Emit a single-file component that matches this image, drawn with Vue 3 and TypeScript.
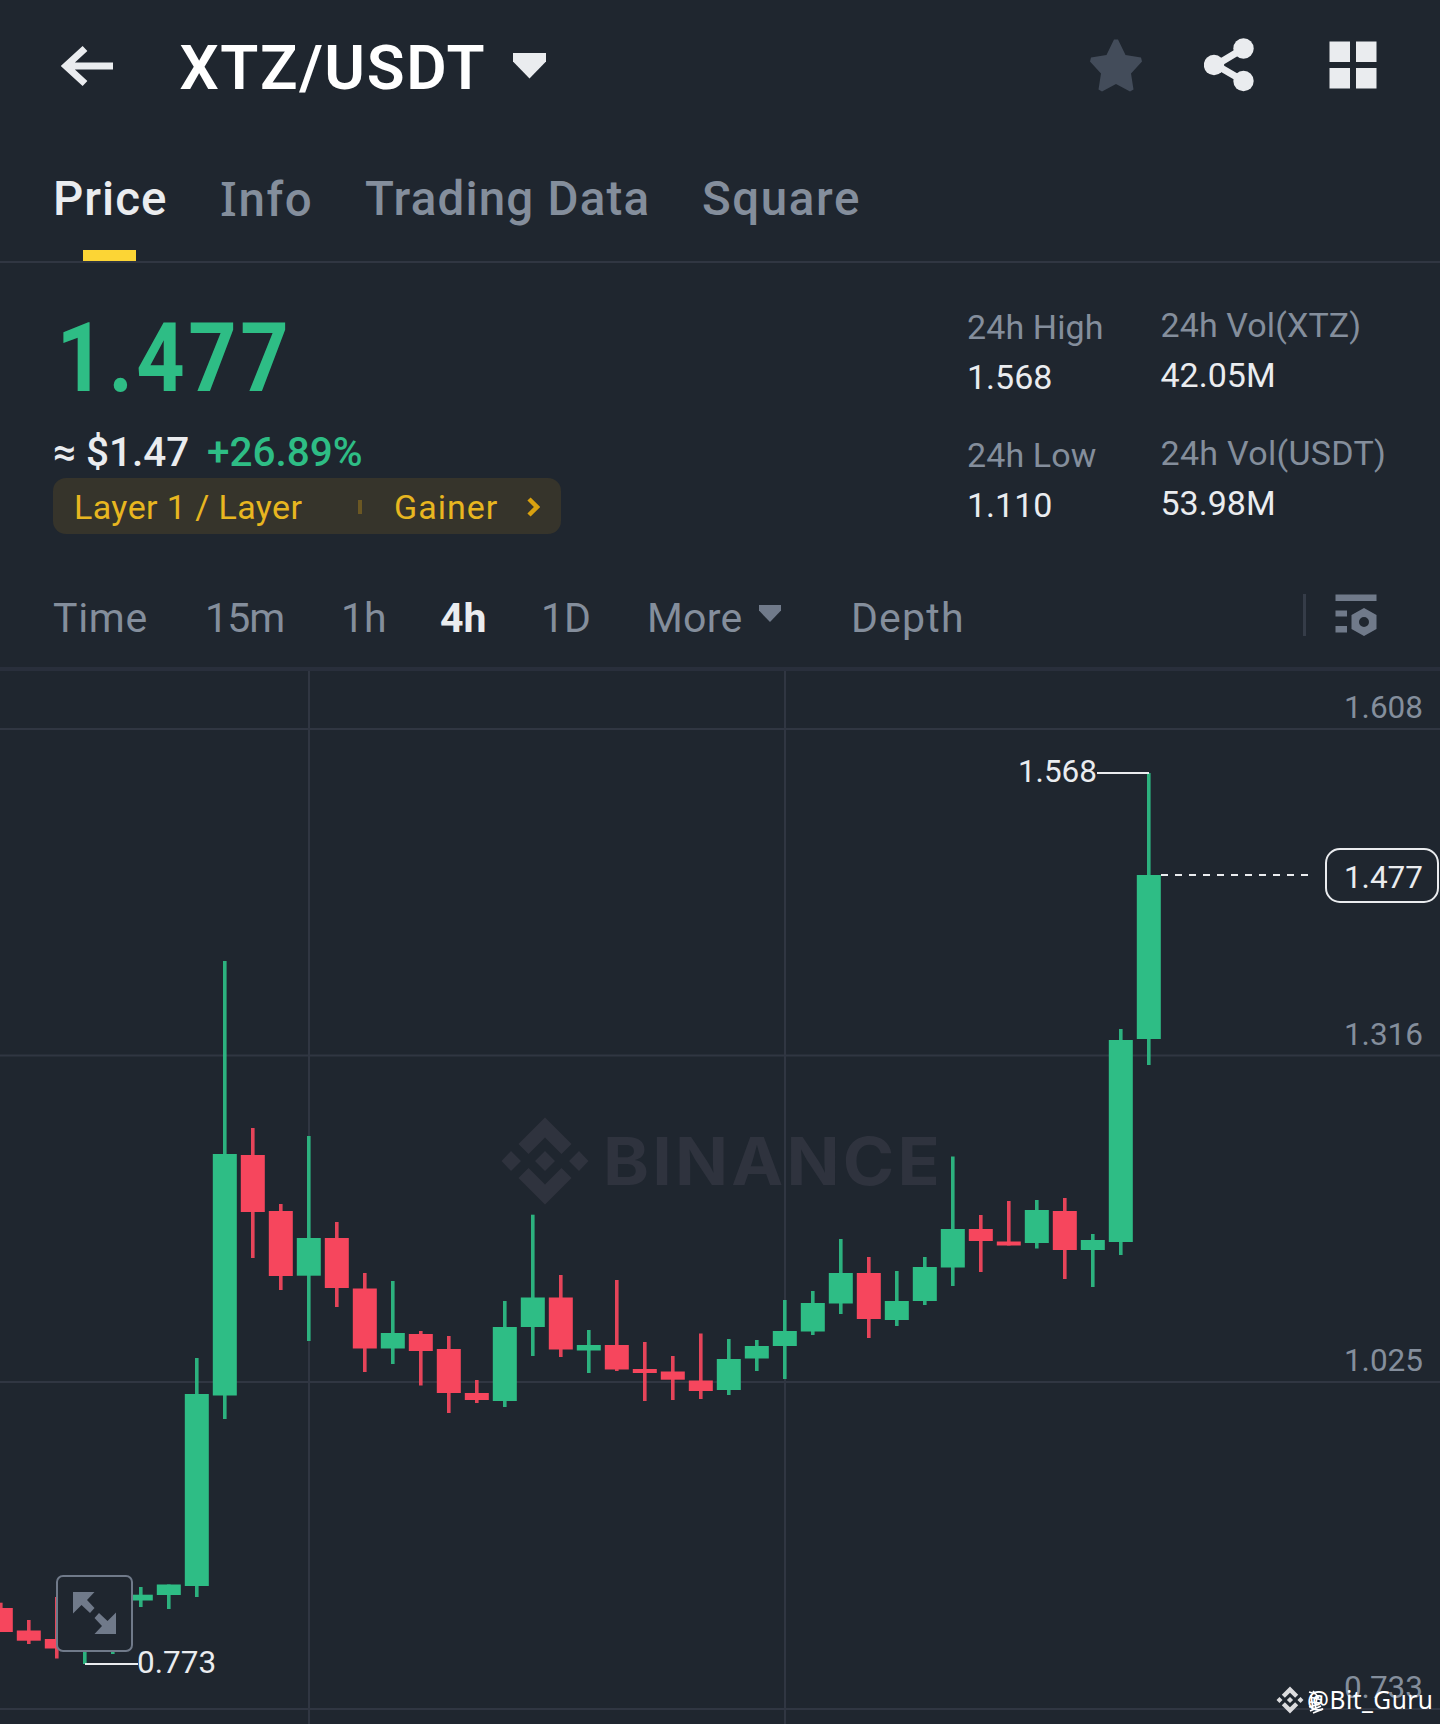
<script setup lang="ts">
type Candle = [wickTop: number, top: number, bottom: number, wickBottom: number, up: boolean]

const STEP = 28
const FIRST_X = 0.8

const candles: Candle[] = [
  [1602.7, 1608, 1632, 1632, false],
  [1620, 1630.5, 1640.7, 1644, false],
  [1597, 1639, 1648.5, 1658.5, false],
  [1630, 1640, 1648, 1664, true],
  [1590, 1600, 1640, 1654, true],
  [1587, 1594.7, 1600.5, 1607, true],
  [1584.5, 1584.5, 1595, 1609, true],
  [1358, 1394, 1586, 1597, true],
  [961, 1154, 1395.5, 1419, true],
  [1128, 1155, 1212, 1258, false],
  [1204, 1211, 1276, 1290, false],
  [1136, 1238, 1275.7, 1341, true],
  [1222, 1238, 1288, 1307, false],
  [1273, 1288.5, 1348.5, 1372, false],
  [1281, 1333, 1348.5, 1364, true],
  [1331, 1334, 1351, 1385.5, false],
  [1336, 1349, 1393, 1413, false],
  [1380, 1393, 1400, 1403, false],
  [1301, 1327, 1401, 1407, true],
  [1214.7, 1297.5, 1327, 1356, true],
  [1275, 1297.5, 1349.5, 1357, false],
  [1330, 1345, 1350.5, 1373, true],
  [1280, 1345, 1369.5, 1371, false],
  [1342, 1369, 1373, 1401, false],
  [1356, 1371.5, 1379.7, 1400, false],
  [1333.5, 1380.5, 1391, 1399, false],
  [1339, 1359, 1390, 1395, true],
  [1340, 1346, 1358.5, 1371, true],
  [1300, 1331, 1346, 1379, true],
  [1291, 1303, 1331.5, 1335, true],
  [1239, 1273, 1303.5, 1314, true],
  [1257, 1273, 1319, 1338, false],
  [1271, 1301, 1320, 1326, true],
  [1257, 1267, 1301, 1305, true],
  [1156.5, 1229, 1267.5, 1286, true],
  [1215, 1229, 1241, 1272, false],
  [1201, 1241.5, 1245.5, 1245.5, false],
  [1200, 1210, 1243, 1248.5, true],
  [1198, 1211, 1250, 1279, false],
  [1234, 1240, 1250, 1287, true],
  [1029, 1040, 1242, 1255, true],
  [773, 875, 1039, 1065, true],
]

const centre = (i: number): number => FIRST_X + i * STEP

const gridRows: { y: number; label: string }[] = [
  { y: 728, label: '1.608' },
  { y: 1054.5, label: '1.316' },
  { y: 1381, label: '1.025' },
  { y: 1708, label: '0.733' },
]
const gridCols: number[] = [308, 784]

const tabs = ['Price', 'Info', 'Trading Data', 'Square']

const stats: { label: string; value: string }[][] = [
  [
    { label: '24h High', value: '1.568' },
    { label: '24h Low', value: '1.110' },
  ],
  [
    { label: '24h Vol(XTZ)', value: '42.05M' },
    { label: '24h Vol(USDT)', value: '53.98M' },
  ],
]

const periods: { text: string; key: string }[] = [
  { text: 'Time', key: 'time' },
  { text: '15m', key: 'm15' },
  { text: '1h', key: 'h1' },
  { text: '4h', key: 'h4' },
  { text: '1D', key: 'd1' },
  { text: 'More', key: 'more' },
  { text: 'Depth', key: 'depth' },
]
</script>

<template>
  <main class="screen">
    <header class="topbar">
      <svg class="back" width="52" height="42" viewBox="0 0 52 42">
        <path d="M24 3.500L5 21L24 38.500M5 21H52" fill="none" stroke="#eaecef" stroke-width="7" />
      </svg>
      <h1 class="pair">XTZ/USDT</h1>
      <svg class="caret" width="33" height="26" viewBox="0 0 33 26">
        <path d="M0 0H33V8.500L16.500 25.500L0 8.500Z" fill="#eaecef" />
      </svg>
      <div class="actions">
        <svg width="54" height="54" viewBox="0 0 54 54">
          <path
            d="M25 1.500H29L36.500 17L52 19.500L53 23.500L42 35.500L44.500 51.500L41 53.500L27 46L13 53.500L9.500 51.500L12 35.500L1 23.500L2 19.500L17.500 17Z"
            fill="#434c5a"
          />
        </svg>
        <svg width="50" height="54" viewBox="0 0 50 54">
          <g fill="#eaecef">
            <circle cx="10" cy="27" r="10.200" />
            <circle cx="39.500" cy="10.500" r="10.200" />
            <circle cx="39.500" cy="43" r="10.200" />
          </g>
          <path d="M39.500 10.500L12 27L39.500 43" fill="none" stroke="#eaecef" stroke-width="7" />
        </svg>
        <svg width="48" height="48" viewBox="0 0 48 48" fill="#eaecef">
          <rect x="0.500" y="0.500" width="20.500" height="20.500" />
          <rect x="27" y="0.500" width="20.500" height="20.500" />
          <rect x="0.500" y="27" width="20.500" height="20.500" />
          <rect x="27" y="27" width="20.500" height="20.500" />
        </svg>
      </div>
    </header>

    <nav class="tabs">
      <span v-for="(t, i) in tabs" :key="t" class="tab" :class="['tab-' + i, { active: i === 0 }]">{{ t }}</span>
    </nav>

    <section class="summary">
      <div class="quote">
        <div class="last">1.477</div>
        <div class="fiat">
          <span class="approx">≈</span><span class="usd">$1.47</span><span class="change">+26.89%</span>
        </div>
        <div class="tags">
          <span class="tag-a">Layer 1 / Layer</span>
          <i class="tag-sep"></i>
          <span class="tag-b">Gainer</span>
          <svg width="13" height="20" viewBox="0 0 13 20">
            <path d="M2 2L10 10L2 18" fill="none" stroke="#d9a10f" stroke-width="4.500" />
          </svg>
        </div>
      </div>
      <div v-for="(col, c) in stats" :key="c" class="stat-col" :class="'stat-col-' + c">
        <div v-for="s in col" :key="s.label" class="stat">
          <div class="stat-label">{{ s.label }}</div>
          <div class="stat-value">{{ s.value }}</div>
        </div>
      </div>
    </section>

    <nav class="periods">
      <span v-for="p in periods" :key="p.key" class="period" :class="p.key">
        {{ p.text }}
        <svg v-if="p.key === 'more'" class="more-caret" width="22" height="17" viewBox="0 0 22 17">
          <path d="M0 0H22V5.500L11 17L0 5.500Z" fill="#707a8a" />
        </svg>
      </span>
      <i class="bar"></i>
      <svg class="settings" width="42" height="42" viewBox="0 0 42 42">
        <g fill="#707a8a">
          <rect x="0.500" y="0.500" width="41" height="6.500" />
          <rect x="0.500" y="16.500" width="11.500" height="6" />
          <rect x="0.500" y="32" width="11.500" height="6.500" />
          <path
            fill-rule="evenodd"
            d="M29 14L41.500 21V35L29 42L16.500 35V21ZM29 23A5 5 0 1 0 29 33A5 5 0 1 0 29 23Z"
          />
        </g>
      </svg>
    </nav>

    <section class="chart">
      <svg class="plot" width="1440" height="1053" viewBox="0 671 1440 1053">
        <g fill="#2f333e">
          <g transform="translate(545 1161)">
            <path d="M0 -43.500L26.500 -17L16.500 -7L0 -23.500L-16.500 -7L-26.500 -17Z" />
            <path d="M0 43.500L26.500 17L16.500 7L0 23.500L-16.500 7L-26.500 17Z" />
            <path d="M0 -10L10 0L0 10L-10 0Z M-34 -10L-24 0L-34 10L-43.500 0Z M34 -10L43.500 0L34 10L24 0Z" />
          </g>
          <text class="brand" x="603" y="1185" textLength="340" lengthAdjust="spacingAndGlyphs">BINANCE</text>
        </g>

        <g fill="#303642">
          <rect v-for="g in gridRows" :key="g.label" x="0" :y="g.y" width="1440" height="2" />
          <rect v-for="x in gridCols" :key="x" :x="x" y="671" width="2" height="1053" />
        </g>

        <g v-for="(c, i) in candles" :key="i" :fill="c[4] ? '#2ebd85' : '#f6465d'">
          <rect :x="centre(i) - 1.800" :y="c[0]" width="3.600" :height="c[3] - c[0]" opacity="0.92" />
          <rect :x="centre(i) - 12" :y="c[1]" width="24" :height="c[2] - c[1]" />
        </g>

        <g class="axis" text-anchor="end">
          <text v-for="g in gridRows" :key="g.label" x="1423" :y="g.y - 10">{{ g.label }}</text>
        </g>

        <g class="marks">
          <path d="M1097 773H1149M85 1664H138" />
          <path d="M1161 875H1310" stroke-dasharray="7 7" />
          <rect x="1326" y="849" width="112" height="53" rx="14" fill="#1f262f" />
          <text x="1423" y="888" text-anchor="end">1.477</text>
          <text x="1097" y="781.500" text-anchor="end">1.568</text>
          <text x="137" y="1672.500">0.773</text>
        </g>

        <g transform="translate(56 1575)">
          <rect x="1" y="1" width="75" height="75" rx="6" fill="#1f262f" stroke="#707a8a" stroke-width="2" />
          <g fill="#707a8a">
            <path d="M17 17H38.500L31 25L38.500 33L34 38L25.500 30L17 38.500Z" />
            <path d="M60 59H38.500L46 51L38.500 43L43 38L51.500 46L60 37.500Z" />
          </g>
        </g>

        <g fill="#dcdcde" transform="translate(1290 1700) scale(0.310)">
          <path d="M0 -43.500L26.500 -17L16.500 -7L0 -23.500L-16.500 -7L-26.500 -17Z" />
          <path d="M0 43.500L26.500 17L16.500 7L0 23.500L-16.500 7L-26.500 17Z" />
          <path d="M0 -10L10 0L0 10L-10 0Z M-34 -10L-24 0L-34 10L-43.500 0Z M34 -10L43.500 0L34 10L24 0Z" />
        </g>
        <text class="credit" x="1307" y="1708.500" textLength="126">@Bit_Guru</text>
        <!-- author's feather mark, drawn over the handle -->
        <path
          d="M1309 1692L1316 1694M1313 1691L1319 1698M1310 1697L1322 1700M1309 1702L1321 1703M1309 1707L1319 1704M1310 1711L1321 1706M1313 1713L1323 1709M1311 1695L1313 1709M1317 1697L1315 1710"
          fill="none"
          stroke="#fff"
          stroke-width="1.700"
        />
      </svg>
    </section>
  </main>
</template>

<style>
body {
  margin: 0;
  background: #1f262f;
}
</style>

<style scoped>
.screen {
  width: 1440px;
  height: 1724px;
  overflow: hidden;
  display: flex;
  flex-direction: column;
  background: #1f262f;
  color: #eaecef;
  font-family: Roboto, "Noto Sans", sans-serif;
  white-space: nowrap;
}
.screen * {
  box-sizing: border-box;
}
.topbar {
  height: 132px;
  display: flex;
  align-items: center;
  padding-left: 61px;
  padding-right: 63px;
  flex: none;
}
.pair {
  margin: 2px 0 0 66.500px;
  width: 307.500px;
  font-size: 62px;
  font-weight: 600;
  color: #fff;
  letter-spacing: 1.600px;
}
.caret {
  margin-left: 26px;
  margin-top: -1px;
}
.actions {
  margin-left: auto;
  margin-top: -2px;
  display: flex;
  align-items: center;
}
.actions svg:nth-child(2) {
  margin-left: 61px;
}
.actions svg:nth-child(3) {
  margin-left: 75px;
}
.tabs {
  height: 131px;
  display: flex;
  align-items: stretch;
  border-bottom: 2px solid #303642;
  padding-left: 53px;
  flex: none;
}
.tab {
  display: flex;
  flex-direction: column;
  font-size: 47.500px;
  line-height: 56px;
  padding-top: 39px;
  color: #848e9c;
  font-weight: 500;
  letter-spacing: 1.200px;
}
.tab.active {
  color: #eaecef;
}
.active::after {
  content: "";
  width: 53px;
  height: 11px;
  margin-top: auto;
  align-self: center;
  background: #fcd535;
}
.tab-0 { width: 167px; padding-right: 54px; letter-spacing: 1px; }
.tab-1 { width: 145px; display: block; padding-top: 37.500px; letter-spacing: 1.600px; }
.tab-1::first-letter { font-family: "Noto Sans", sans-serif; }
.tab-2 { width: 337px; }
.tab-3 { letter-spacing: 1.600px; }
.summary {
  height: 290px;
  display: flex;
  flex: none;
}
.quote {
  width: 967px;
  flex: none;
  padding-left: 53px;
}
.last {
  margin-top: 38px;
  height: 112px;
  line-height: 114px;
  font-size: 97px;
  font-weight: 700;
  color: #2ebd85;
  letter-spacing: 4px;
  padding-left: 4px;
  transform: scaleX(0.870);
  transform-origin: left;
}
.fiat {
  height: 65px;
  line-height: 78px;
  display: flex;
  font-size: 40.500px;
  font-weight: 500;
}
.approx { width: 33px; }
.usd { width: 121px; }
.change { color: #2ebd85; }
.tags {
  display: flex;
  align-items: center;
  width: 508px;
  height: 56px;
  border-radius: 13px;
  background: #36342b;
  color: #e8b620;
  font-size: 34px;
  padding: 2px 21px 0 21px;
}
.tag-a { width: 284px; letter-spacing: 0.400px; }
.tag-sep {
  width: 4px;
  height: 14px;
  background: #6b5723;
}
.tag-b { margin-left: 32px; letter-spacing: 1px; }
.tags svg { margin-left: auto; }
.stat-col { padding-top: 42px; }
.stat-col-0 { width: 193.500px; padding-top: 44px; }
.stat { height: 128px; }
.stat-label {
  font-size: 34px;
  line-height: 40px;
  color: #848e9c;
  letter-spacing: 0.120px;
}
.stat-col-1 .stat:last-child .stat-label { letter-spacing: 0.300px; }
.stat-value {
  font-size: 34px;
  line-height: 40px;
  margin-top: 10px;
}
.periods {
  height: 118px;
  border-bottom: 4px solid #292f3c;
  display: flex;
  align-items: center;
  padding-left: 53px;
  padding-top: 10px;
  font-size: 41px;
  color: #848e9c;
  flex: none;
}
.period {
  display: flex;
  align-items: center;
  line-height: 50px;
  padding-top: 6px;
}
.time { width: 152px; letter-spacing: 0.700px; }
.m15 { width: 136px; letter-spacing: -0.900px; }
.h1 { width: 99px; }
.h4 { width: 101px; color: #eaecef; font-weight: 700; }
.d1 { width: 106px; }
.more { width: 204px; letter-spacing: 0.300px; }
.depth { letter-spacing: 1.200px; }
.more-caret { margin: -9px 0 0 16px; }
.bar {
  width: 3px;
  height: 42px;
  background: #353c48;
  margin-left: auto;
}
.settings { margin: 0 63px 0 29px; }
.chart {
  height: 1053px;
  flex: none;
}
.plot { display: block; }
.brand {
  font-family: Inter, sans-serif;
  font-weight: 700;
  font-size: 66px;
  letter-spacing: 3px;
}
.axis, .marks {
  font-size: 31.500px;
  fill: #848e9c;
}
.marks path, .marks rect {
  stroke: #eaecef;
  stroke-width: 2;
}
.marks text { fill: #eaecef; }
.credit {
  font-family: "Noto Sans", sans-serif;
  font-size: 24.500px;
  font-weight: 400;
  fill: #fff;
}
</style>
